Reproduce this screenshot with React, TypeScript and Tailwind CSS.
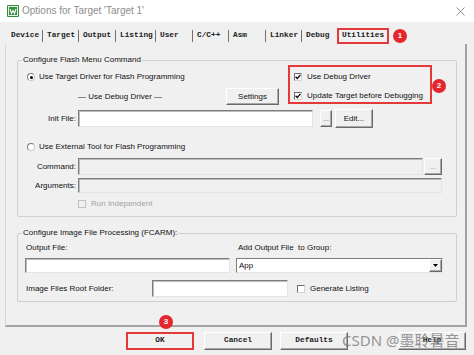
import React from "react";

const Badge = ({ n, className = "" }: { n: string; className?: string }) => (
  <div
    className={
      "flex h-[14px] w-[14px] items-center justify-center rounded-full bg-[#e6262d] font-['Liberation_Sans',Arial,sans-serif] text-[8px] font-bold leading-none text-white " +
      className
    }
  >
    {n}
  </div>
);

const Radio = ({ checked }: { checked?: boolean }) => (
  <span className="flex h-[8px] w-[8px] shrink-0 items-center justify-center rounded-full border border-t-[#7a7a7a] border-l-[#7a7a7a] border-r-[#c8c8c8] border-b-[#c8c8c8] bg-white">
    {checked && <span className="h-[3px] w-[3px] rounded-full bg-black" />}
  </span>
);

const Check = ({ checked, disabled }: { checked?: boolean; disabled?: boolean }) => (
  <span
    className={
      "flex h-[8px] w-[8px] shrink-0 items-center justify-center border " +
      (disabled
        ? "border-[#c2c2c2] bg-[#f0f0f0]"
        : "border-t-[#6e6e6e] border-l-[#6e6e6e] border-r-[#d4d4d4] border-b-[#d4d4d4] bg-white")
    }
  >
    {checked && (
      <svg width="6" height="6" viewBox="0 0 6 6">
        <path d="M0.6 2.8 L2.3 4.6 L5.4 0.9" stroke="#000" strokeWidth="1.3" fill="none" />
      </svg>
    )}
  </span>
);

const Field = ({ className = "", disabled }: { className?: string; disabled?: boolean }) => (
  <div
    className={
      "border border-t-[#7d7d7d] border-l-[#7d7d7d] border-r-[#e4e4e4] border-b-[#e4e4e4] shadow-[inset_1px_1px_0_#bdbdbd] " +
      (disabled ? "bg-[#f0f0f0] " : "bg-white ") +
      className
    }
  />
);

const Btn = ({ children, className = "" }: { children?: React.ReactNode; className?: string }) => (
  <div
    className={
      "flex shrink-0 items-center justify-center border border-t-white border-l-white border-r-[#6a6a6a] border-b-[#6a6a6a] bg-[#f0f0f0] shadow-[inset_-1px_-1px_0_#a8a8a8] " +
      className
    }
  >
    {children}
  </div>
);

const tabs: { t: string; w: string }[] = [
  { t: "Device", w: "w-[35px]" },
  { t: "Target", w: "w-[35px]" },
  { t: "Output", w: "w-[36px]" },
  { t: "Listing", w: "w-[39px]" },
  { t: "User", w: "w-[36px]" },
  { t: "C/C++", w: "w-[35px]" },
  { t: "Asm", w: "w-[36px]" },
  { t: "Linker", w: "w-[35px]" },
  { t: "Debug", w: "w-[35px]" },
];

export default function App() {
  return (
    <div className="relative h-[355px] w-[474px] overflow-hidden bg-[#f0f0f0] font-['Liberation_Sans',Arial,sans-serif] text-[8px] leading-none text-[#111]">
      {/* Title bar */}
      <div className="flex h-[22px] items-center bg-white pl-[7px] pr-[9px]">
        <svg width="12" height="12" viewBox="0 0 12 12">
          <rect x="0" y="0" width="12" height="12" rx="1" fill="#2f8f3a" />
          <rect x="1.5" y="1.5" width="9" height="9" fill="none" stroke="#e8f5e8" strokeWidth="1" />
          <path d="M3 4 L4.5 8.5 L6 5.5 L7.5 8.5 L9 4" stroke="#ffffff" strokeWidth="1.1" fill="none" />
        </svg>
        <span className="ml-[3px] text-[10px] text-[#8c8c8c]">Options for Target 'Target 1'</span>
        <svg className="ml-auto" width="9" height="9" viewBox="0 0 9 9">
          <path d="M0.5 0.5 L8.5 8.5 M8.5 0.5 L0.5 8.5" stroke="#8a8a8a" strokeWidth="0.9" />
        </svg>
      </div>

      {/* Tabs */}
      <div className="flex h-[22px] items-center pl-[7px] pt-[5px] font-['Liberation_Mono','DejaVu_Sans_Mono',monospace] text-[7.8px] font-bold text-[#222]">
        {tabs.map((tb, i) => (
          <React.Fragment key={tb.t}>
            {i > 0 && <div className="h-[12px] w-px shrink-0 bg-[#707070]" />}
            <div className={tb.w + " shrink-0 pl-[4px]"}>{tb.t}</div>
          </React.Fragment>
        ))}
        <div className="flex h-[16px] w-[52px] shrink-0 items-center border-2 border-[#e23a3a] pl-[3px]">Utilities</div>
        <Badge n="1" className="ml-[4px]" />
      </div>

      {/* Tab page */}
      <div className="mx-[5px] h-[283px] w-[462px] border-l border-r-2 border-b-2 border-l-[#d8d8d8] border-r-[#a3a3a3] border-b-[#a3a3a3] pl-[11px] pt-[11px]">
        <fieldset className="w-[440px] rounded-[2px] border border-[#d0d0d0]">
          <legend className="ml-[4px] px-[1px] leading-[10px]">Configure Flash Menu Command</legend>
          <div className="flex flex-col pb-[7px]">
            <div className="flex h-[41px]">
              <div className="flex w-[270px] flex-col">
                <div className="mt-[6px] flex h-[12px] items-center gap-[4px] pl-[9px]">
                  <Radio checked />
                  <span>Use Target Driver for Flash Programming</span>
                </div>
                <div className="mt-[5px] flex h-[17px] items-center pl-[60px]">
                  <span className="w-[148px]">— Use Debug Driver —</span>
                  <Btn className="h-[17px] w-[53px]">Settings</Btn>
                </div>
              </div>
              <div className="flex h-[39px] w-[144px] flex-col gap-[9px] border-2 border-[#e23a3a] pl-[4px] pt-[5px]">
                <div className="flex h-[10px] items-center gap-[5px]">
                  <Check checked />
                  <span>Use Debug Driver</span>
                </div>
                <div className="flex h-[10px] items-center gap-[5px]">
                  <Check checked />
                  <span>Update Target before Debugging</span>
                </div>
              </div>
              <Badge n="2" className="mt-[14px]" />
            </div>

            <div className="mt-[3px] flex h-[19px] items-center">
              <span className="w-[58px] text-right">Init File:</span>
              <Field className="ml-[2px] h-[17px] w-[235px]" />
              <Btn className="ml-[7px] h-[17px] w-[12px] text-[7px] text-[#555]">...</Btn>
              <Btn className="ml-[3px] h-[19px] w-[38px]">Edit...</Btn>
            </div>

            <div className="mt-[13px] flex h-[12px] items-center gap-[4px] pl-[9px]">
              <Radio />
              <span>Use External Tool for Flash Programming</span>
            </div>

            <div className="mt-[5px] flex h-[17px] items-center">
              <span className="w-[58px] text-right">Command:</span>
              <Field disabled className="ml-[2px] h-[17px] w-[345px]" />
              <Btn className="ml-[1px] h-[17px] w-[18px] text-[7px] text-[#888]">...</Btn>
            </div>
            <div className="mt-[3px] flex h-[15px] items-center">
              <span className="w-[58px] text-right">Arguments:</span>
              <Field disabled className="ml-[2px] h-[15px] w-[364px]" />
            </div>
            <div className="mt-[6px] flex h-[10px] items-center gap-[5px] pl-[60px]">
              <Check disabled />
              <span className="text-[#a3a3a3]">Run Independent</span>
            </div>
          </div>
        </fieldset>

        <fieldset className="mt-[11px] w-[440px] rounded-[2px] border border-[#d0d0d0]">
          <legend className="ml-[4px] px-[1px] leading-[10px]">Configure Image File Processing (FCARM):</legend>
          <div className="flex flex-col pb-[4px]">
            <div className="mt-[5px] flex h-[10px] items-center">
              <span className="w-[220px] pl-[8px]">Output File:</span>
              <span>Add Output File&nbsp; to Group:</span>
            </div>
            <div className="mt-[5px] flex h-[15px] items-center pl-[7px]">
              <Field className="h-[15px] w-[205px]" />
              <div className="ml-[6px] flex h-[15px] w-[207px] items-center border border-t-[#7d7d7d] border-l-[#7d7d7d] border-r-[#e4e4e4] border-b-[#e4e4e4] bg-white pl-[2px]">
                <span>App</span>
                <Btn className="ml-auto h-[13px] w-[13px]">
                  <svg width="5" height="3" viewBox="0 0 5 3">
                    <path d="M0 0 L5 0 L2.5 3 Z" fill="#000" />
                  </svg>
                </Btn>
              </div>
            </div>
            <div className="mt-[7px] flex h-[17px] items-center">
              <span className="w-[134px] pl-[8px]">Image Files Root Folder:</span>
              <Field className="h-[17px] w-[136px]" />
              <span className="ml-[9px]">
                <Check />
              </span>
              <span className="ml-[5px]">Generate Listing</span>
            </div>
          </div>
        </fieldset>
      </div>

      {/* Bottom buttons */}
      <div className="mt-[5px] flex h-[18px] pl-[126px] font-['Liberation_Mono','DejaVu_Sans_Mono',monospace] text-[7.8px] font-bold text-[#222]">
        <div className="relative flex h-[18px] w-[68px] items-center justify-center border-2 border-[#e23a3a] bg-[#f0f0f0]">
          OK
          <Badge n="3" className="absolute left-[31px] top-[-19px]" />
        </div>
        <Btn className="ml-[10px] h-[18px] w-[68px]">Cancel</Btn>
        <Btn className="ml-[8px] h-[18px] w-[68px]">Defaults</Btn>
        <Btn className="ml-[50px] h-[18px] w-[68px]">Help</Btn>
      </div>

      <div className="absolute left-[342px] top-[331px] whitespace-nowrap font-['Noto_Sans','Noto_Sans_CJK_SC',sans-serif] text-[15px] leading-[18px] text-[#7a7a7a]/80">
        CSDN @墨聆暑音
      </div>
    </div>
  );
}
